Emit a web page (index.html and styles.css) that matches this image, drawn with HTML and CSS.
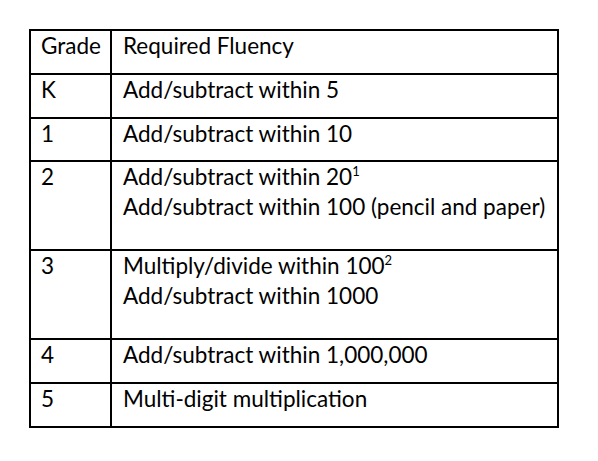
FILE: index.html
```html
<!DOCTYPE html>
<html>
<head>
<meta charset="utf-8">
<link rel="stylesheet" href="styles.css">
</head>
<body>
<table class="fluency">
  <colgroup><col class="c-grade"><col class="c-fluency"></colgroup>
  <tr class="r1"><td>Grade</td><td>Required Fluency</td></tr>
  <tr class="r1"><td>K</td><td>Add/subtract within 5</td></tr>
  <tr class="r1"><td>1</td><td>Add/subtract within 10</td></tr>
  <tr class="r2"><td>2</td><td><div>Add/subtract within 20<sup>1</sup></div><div>Add/subtract within 100 (pencil and paper)</div></td></tr>
  <tr class="r2"><td>3</td><td><div>Multiply/divide within 100<sup>2</sup></div><div>Add/subtract within 1000</div></td></tr>
  <tr class="r1"><td>4</td><td>Add/subtract within 1,000,000</td></tr>
  <tr class="r1"><td>5</td><td>Multi-digit multiplication</td></tr>
</table>
</body>
</html>
```
FILE: styles.css
```css
html, body {
  margin: 0;
  padding: 0;
  background: #ffffff;
}
body {
  padding: 29px 0 0 29px;
  font-family: Lato, "Open Sans", sans-serif;
  color: #000;
}
.fluency {
  border-collapse: collapse;
  table-layout: fixed;
  width: 530px;
  font-size: 22.5px;
  line-height: 30px;
}
.c-grade { width: 81px; }
.fluency td {
  border: 2px solid #000;
  vertical-align: top;
  padding: 0 2px 0 10px;
}
.fluency td + td {
  padding-left: 11px;
}
.r1 { height: 44px; }
.r2 { height: 89px; }
.fluency tr:nth-child(3) { height: 43px; }
sup {
  font-size: 13px;
  line-height: 0;
  vertical-align: 9px;
}
```
